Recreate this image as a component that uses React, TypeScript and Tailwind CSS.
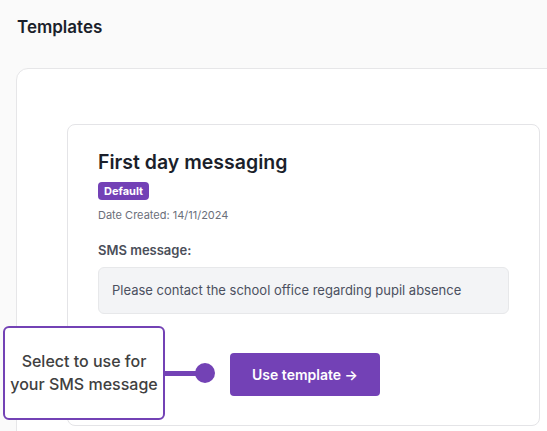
export default function App() {
  return (
    <div className="relative h-[431px] w-[547px] overflow-hidden bg-[#fafafa] font-['Inter',sans-serif]">
      <h1 className="px-[17px] pt-[15px] text-[17px] font-semibold leading-6 text-[#1b1f2b]">Templates</h1>

      <div className="ml-4 mt-[29px] w-[600px] rounded-tl-xl border border-[#e6e6e8] bg-white pb-10 pl-[50px] pt-[55px]">
        <div className="w-[473px] rounded-lg border border-[#e4e4e7] bg-white px-[30px] pb-[29px] pt-[23px]">
          <h2 className="text-[19.5px] font-semibold leading-7 text-[#1b1f2b]">First day messaging</h2>
          <span className="mt-[6px] inline-flex h-[18px] items-center rounded bg-[#7341b6] px-[6px] text-[11px] font-bold text-white">
            Default
          </span>
          <p className="mt-[6px] text-[11px] leading-4 text-[#6b6f7a]">Date Created: 14/11/2024</p>
          <p className="mt-[17px] text-[13px] font-semibold leading-5 text-[#4a4e59]">SMS message:</p>
          <div className="mt-[7px] flex h-[47px] items-center rounded-md border border-[#e7e8ea] bg-[#f3f4f6] px-[13px] text-[13px] text-[#4b5060]">
            Please contact the school office regarding pupil absence
          </div>
          <div className="mt-[39px] flex pl-[132px]">
            <button
              type="button"
              className="flex h-[43px] w-[150px] items-center justify-center rounded bg-[#7341b6] text-[14px] font-semibold text-white"
            >
              Use template →
            </button>
          </div>
        </div>
      </div>

      {/* callout overlay */}
      <div className="absolute left-[3px] top-[326px] flex items-center">
        <div className="flex h-[94px] w-[162px] items-center justify-center rounded-md border-2 border-[#7342b5] bg-white text-center text-[16px] font-medium leading-[23px] text-[#404040]">
          Select to use for
          <br />
          your SMS message
        </div>
        <div className="h-[5px] w-[32px] bg-[#7342b5]" />
        <div className="-ml-[2px] h-5 w-5 rounded-full bg-[#7342b5]" />
      </div>
    </div>
  );
}
